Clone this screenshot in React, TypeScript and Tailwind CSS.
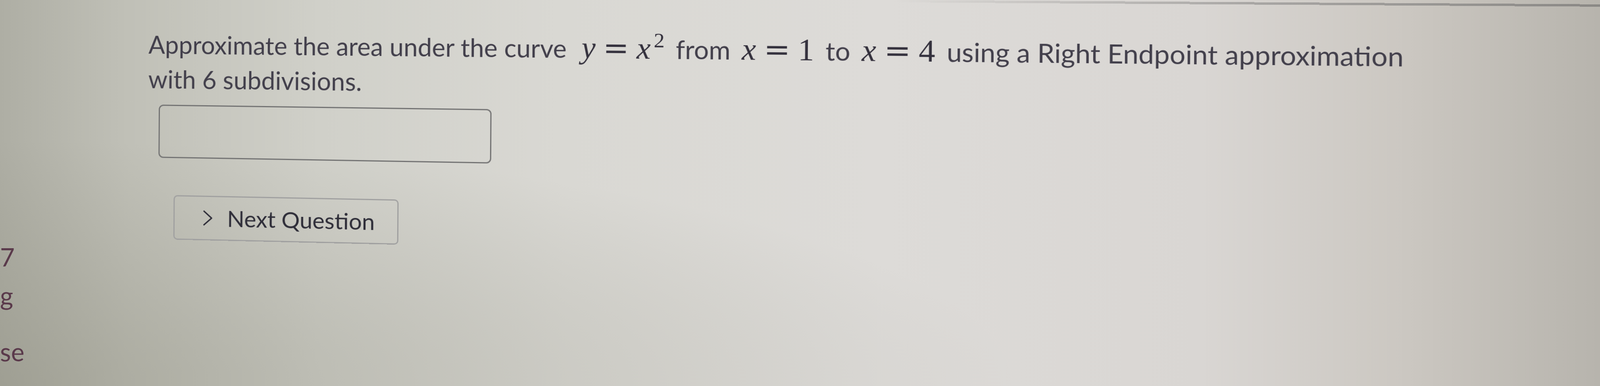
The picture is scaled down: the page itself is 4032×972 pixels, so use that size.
import { ReactNode } from 'react'

function M({ children }: { children: ReactNode }) {
  return (
    <span className="mx-[0.14em] font-['Liberation_Serif','DejaVu_Serif',serif] text-[1.22em] text-[#34313d]">
      {children}
    </span>
  )
}

function Eq({ left, right }: { left: ReactNode; right: ReactNode }) {
  return (
    <M>
      {left}
      <span className="mx-[0.24em] font-['DejaVu_Serif',serif] text-[0.98em]">=</span>
      {right}
    </M>
  )
}

export default function App() {
  return (
    <div className="relative flex h-[972px] w-full overflow-hidden bg-[radial-gradient(ellipse_at_0%_100%,rgba(130,130,115,0.35),transparent_45%),linear-gradient(90deg,#aeaea4_0%,#c0c0b7_8%,#d0d0c9_20%,#d9d8d3_35%,#dddbd8_55%,#d9d6d3_75%,#cbc7c1_88%,#b7b4ad_100%)] font-['Lato','Noto_Sans',sans-serif] text-[#423f4b]">
      {/* cut-off sidebar */}
      <aside className="w-[375px] shrink-0 pt-[609px] text-[64px] text-[#5a3a4b]">
        <div className="h-[76px] leading-[76px]">7</div>
        <div className="mt-[22px] h-[76px] leading-[76px]">g</div>
        <div className="mt-[65px] h-[76px] leading-[76px]">se</div>
      </aside>

      {/* question — slight perspective to follow the photo */}
      <main className="flex-1 origin-top-left pt-[69px] [transform:perspective(4000px)_rotateY(-6deg)_rotate(0.38deg)]">
        <p className="text-[62px] leading-[80px]">
          Approximate the area under the curve{' '}
          <span className="ml-[0.15em]" />
          <Eq
            left={<span className="italic">y</span>}
            right={
              <>
                <span className="italic">x</span>
                <span className="relative -top-[0.55em] ml-[0.14em] text-[0.68em]">2</span>
              </>
            }
          />{' '}
          from <Eq left={<span className="italic">x</span>} right="1" /> to{' '}
          <Eq left={<span className="italic">x</span>} right="4" /> using a Right Endpoint approximation
          <br />
          with 6 subdivisions.
        </p>

        <div className="mt-[25px] ml-[27px] h-[134px] w-[824px] rounded-[12px] border-[3px] border-[#747474]" />

        <button className="mt-[93px] ml-[66px] flex h-[112px] w-[560px] items-center rounded-[10px] border-[3px] border-[#a0a0a0] pl-[70px] text-[57px] text-[#2f2e39]">
          <svg width="28" height="42" viewBox="0 0 14 21" fill="none" stroke="currentColor" strokeWidth="1.8" strokeLinecap="round" strokeLinejoin="round">
            <path d="M2 2l9.5 8.5L2 19" />
          </svg>
          <span className="ml-[34px]">Next Question</span>
        </button>
      </main>

      {/* screen edge */}
      <div className="absolute top-0 left-[2260px] right-0 h-[6px] origin-top-left rotate-[0.35deg] bg-gradient-to-r from-transparent via-[#a8a6a4] to-[#8a8885]" />
    </div>
  )
}
